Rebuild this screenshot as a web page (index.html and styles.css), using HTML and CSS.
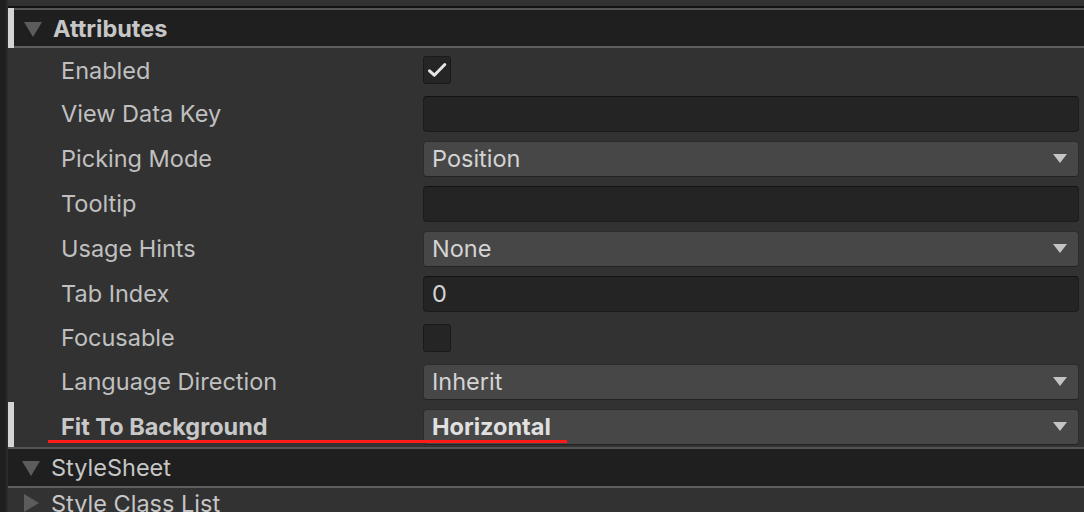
FILE: index.html
```html
<!DOCTYPE html>
<html>
<head>
<meta charset="utf-8">
<link rel="stylesheet" href="styles.css">
</head>
<body>
<div class="app">
  <div class="sidebar"></div>
  <div class="main">
    <div class="topgap"></div>
    <div class="topline"></div>
    <div class="section-header modified">
      <span class="tri-down"></span>
      <span class="header-title bold">Attributes</span>
    </div>
    <div class="rows">
      <div class="row cb first">
        <span class="label">Enabled</span>
        <span class="checkbox">
          <svg width="28" height="28" viewBox="0 0 28 28"><path d="M6.5 14.8 L11.3 19.2 L21.8 8.5" fill="none" stroke="#e6e6e6" stroke-width="3" stroke-linecap="round" stroke-linejoin="round"/></svg>
        </span>
      </div>
      <div class="row">
        <span class="label">View Data Key</span>
        <span class="field"></span>
      </div>
      <div class="row">
        <span class="label">Picking Mode</span>
        <span class="dropdown"><span class="value">Position</span><span class="arrow"></span></span>
      </div>
      <div class="row">
        <span class="label">Tooltip</span>
        <span class="field"></span>
      </div>
      <div class="row">
        <span class="label">Usage Hints</span>
        <span class="dropdown"><span class="value">None</span><span class="arrow"></span></span>
      </div>
      <div class="row">
        <span class="label">Tab Index</span>
        <span class="field"><span class="value">0</span></span>
      </div>
      <div class="row cb">
        <span class="label">Focusable</span>
        <span class="checkbox"></span>
      </div>
      <div class="row">
        <span class="label">Language Direction</span>
        <span class="dropdown"><span class="value">Inherit</span><span class="arrow"></span></span>
      </div>
      <div class="row last modified">
        <span class="label bold">Fit To Background</span>
        <span class="dropdown"><span class="value bold">Horizontal</span><span class="arrow"></span></span>
        <span class="underline"></span>
      </div>
    </div>
    <div class="section-header tall">
      <span class="tri-down small"></span>
      <span class="header-title">StyleSheet</span>
    </div>
    <div class="sub-row">
      <span class="tri-right"></span>
      <span class="header-title">Style Class List</span>
    </div>
  </div>
</div>
</body>
</html>
```

FILE: styles.css
```css
html, body {
  margin: 0;
  padding: 0;
}
body {
  width: 1084px;
  height: 512px;
  overflow: hidden;
  background: #323232;
  font-family: Inter, "Noto Sans", sans-serif;
  font-size: 23.5px;
  color: #c2c2c2;
}
.app {
  display: flex;
  height: 512px;
  overflow: hidden;
}
.sidebar {
  width: 6px;
  background: #1f1f1f;
  border-right: 2px solid #2a2a2a;
  flex: none;
}
.main {
  flex: 1;
  display: flex;
  flex-direction: column;
}
.main > * {
  flex: none;
}
.topgap {
  height: 6px;
  background: #323232;
}
.topline {
  height: 2px;
  background: #121212;
}
.section-header {
  position: relative;
  height: 36px;
  background: #1f1f1f;
  border-top: 2px solid #545454;
  border-bottom: 2px solid #5e5e5e;
  display: flex;
  align-items: center;
}
.section-header.tall {
  height: 37px;
}
.section-header .header-title {
  color: #c6c6c6;
}
.modified::before {
  content: "";
  position: absolute;
  left: 0;
  top: -2px;
  bottom: -2px;
  width: 6px;
  background: #d4d4d4;
}
.row.modified::before {
  top: -2px;
  bottom: 0;
}
.tri-down {
  width: 0;
  height: 0;
  margin-left: 16px;
  margin-right: 11px;
  border-left: 9px solid transparent;
  border-right: 9px solid transparent;
  border-top: 15px solid #5c5c5c;
  margin-top: 2px;
}
.tri-down.small {
  margin-left: 14px;
  margin-right: 11px;
}
.tri-right {
  width: 0;
  height: 0;
  margin-left: 16px;
  margin-right: 12px;
  border-top: 9px solid transparent;
  border-bottom: 9px solid transparent;
  border-left: 15px solid #5c5c5c;
}
.header-title {
  font-size: 23.5px;
}
.bold {
  font-weight: 700;
}
.rows {
  display: flex;
  flex-direction: column;
}
.row {
  position: relative;
  height: 45px;
  display: flex;
  align-items: center;
  padding-left: 53px;
  padding-right: 5px;
  flex: none;
}
.row.cb {
  height: 43px;
}
.row.first {
  height: 42px;
  padding-top: 1px;
}
.row.last {
  height: 41px;
  padding-top: 2px;
}
.label {
  width: 362px;
  flex: none;
  color: #c0c0c0;
  white-space: nowrap;
}
.label.bold {
  color: #c8c8c8;
}
.checkbox {
  width: 26px;
  height: 26px;
  background: #252525;
  border: 1px solid #1a1a1a;
  border-radius: 3px;
  display: flex;
}
.checkbox svg {
  margin: -1px;
}
.field {
  flex: 1;
  height: 34px;
  background: #242424;
  border: 1px solid #1c1c1c;
  border-top-color: #121212;
  border-radius: 4px;
  display: flex;
  align-items: center;
}
.dropdown {
  flex: 1;
  height: 34px;
  background: #474747;
  border: 1px solid #2c2c2c;
  border-bottom-color: #232323;
  border-radius: 4px;
  display: flex;
  align-items: center;
  justify-content: space-between;
}
.value {
  margin-left: 8px;
  color: #d4d4d4;
}
.value.bold {
  color: #e0e0e0;
}
.arrow {
  width: 0;
  height: 0;
  margin-right: 11px;
  border-left: 7px solid transparent;
  border-right: 7px solid transparent;
  border-top: 9px solid #c4c4c4;
}
.underline {
  position: absolute;
  left: 40px;
  top: 36px;
  width: 519px;
  height: 3px;
  background: #ff1a1a;
}
.sub-row {
  height: 30px;
  display: flex;
  align-items: center;
  background: #323232;
}
.sub-row .header-title {
  color: #c6c6c6;
}
```
